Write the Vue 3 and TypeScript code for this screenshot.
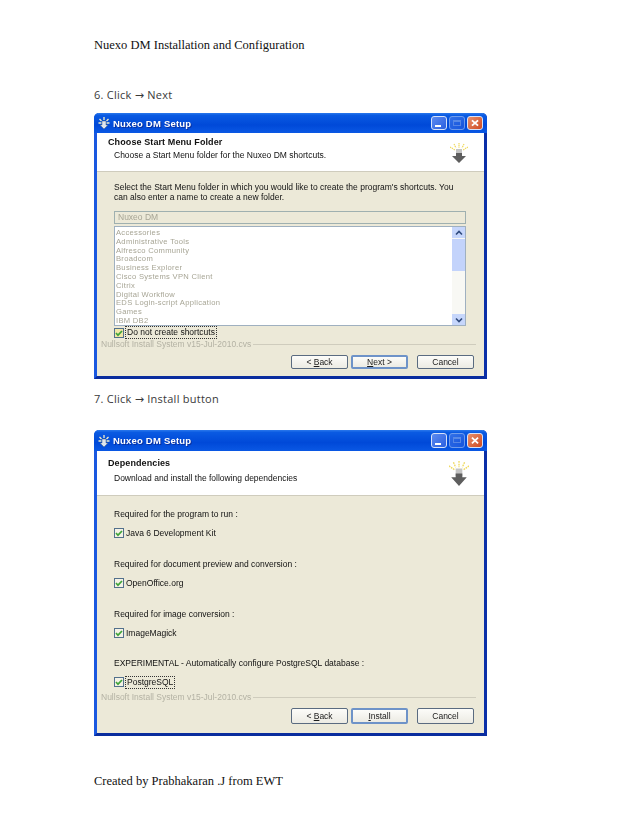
<script setup lang="ts">
const folders: string[] = [
  'Accessories',
  'Administrative Tools',
  'Alfresco Community',
  'Broadcom',
  'Business Explorer',
  'Cisco Systems VPN Client',
  'Citrix',
  'Digital Workflow',
  'EDS Login-script Application',
  'Games',
  'IBM DB2',
]

const deps: { label: string; item: string; focus?: boolean }[] = [
  { label: 'Required for the program to run :', item: 'Java 6 Development Kit' },
  { label: 'Required for document preview and conversion :', item: 'OpenOffice.org' },
  { label: 'Required for image conversion :', item: 'ImageMagick' },
  { label: 'EXPERIMENTAL - Automatically configure PostgreSQL database :', item: 'PostgreSQL', focus: true },
]
</script>

<template>
  <div class="page">
    <p class="doc-title">Nuexo DM Installation and Configuration</p>

    <p class="step first">6. Click <span class="arr">→</span> Next</p>

    <section class="dialog d1">
      <div class="titlebar">
        <svg class="app-icon" viewBox="0 0 14 14" width="14" height="14">
          <path d="M7 1v3M2.5 3l2 2M11.5 3l-2 2M1.5 7h3M12.5 7h-3" stroke="#f4f0c8" stroke-width="1.3" fill="none" />
          <path d="M5 5h4v4h2l-4 4-4-4h2z" fill="#dfe6ee" stroke="#44607c" stroke-width=".5" />
        </svg>
        <span class="title-text">Nuxeo DM Setup</span>
        <span class="wbtn min"><i></i></span>
        <span class="wbtn max"><i></i></span>
        <span class="wbtn close">
          <svg viewBox="0 0 16 16" preserveAspectRatio="none"><path d="M4.5 4.5l7 7M11.5 4.5l-7 7" stroke="#fff" stroke-width="2" /></svg>
        </span>
      </div>
      <header class="head">
        <div>
          <h4>Choose Start Menu Folder</h4>
          <p>Choose a Start Menu folder for the Nuxeo DM shortcuts.</p>
        </div>
        <svg class="setup-icon" viewBox="0 0 18 20" preserveAspectRatio="none">
          <path d="M9 0v5M4 1l2 4M14 1l-2 4M0 4l5 3M18 4l-5 3" stroke="#efd95e" stroke-width="1.2" stroke-dasharray="1.4 .7" fill="none" />
          <path d="M6 6h6v6H6z" fill="#c4c4c4" />
          <path d="M6 10h6v3h4l-7 7-7-7h4z" fill="#5e5e5e" />
        </svg>
      </header>
      <div class="body">
        <p class="intro">Select the Start Menu folder in which you would like to create the program's shortcuts. You can also enter a name to create a new folder.</p>
        <div class="folder-input">Nuxeo DM</div>
        <div class="listbox">
          <ul>
            <li v-for="f in folders" :key="f">{{ f }}</li>
          </ul>
          <div class="scroll">
            <span class="arrow"><svg viewBox="0 0 10 8" width="10" height="8"><path d="M2 5.5l3-3 3 3" stroke="#2f4a7d" stroke-width="1.6" fill="none" /></svg></span>
            <span class="thumb"></span>
            <span class="track"></span>
            <span class="arrow"><svg viewBox="0 0 10 8" width="10" height="8"><path d="M2 2.5l3 3 3-3" stroke="#2f4a7d" stroke-width="1.6" fill="none" /></svg></span>
          </div>
        </div>
        <label class="check short">
          <span class="box yellow"><svg viewBox="0 0 10 10" width="10" height="10"><path d="M2 5l2 2.2L8 3" stroke="#3fa33a" stroke-width="1.7" fill="none" /></svg></span>
          <span class="focus">Do not create shortcuts</span>
        </label>
      </div>
      <div class="brand"><span>Nullsoft Install System v15-Jul-2010.cvs</span><i></i></div>
      <div class="actions">
        <button class="btn">&lt; <u>B</u>ack</button>
        <button class="btn default"><u>N</u>ext &gt;</button>
        <button class="btn cancel">Cancel</button>
      </div>
    </section>

    <p class="step second">7. Click <span class="arr">→</span> Install button</p>

    <section class="dialog d2">
      <div class="titlebar">
        <svg class="app-icon" viewBox="0 0 14 14" width="14" height="14">
          <path d="M7 1v3M2.5 3l2 2M11.5 3l-2 2M1.5 7h3M12.5 7h-3" stroke="#f4f0c8" stroke-width="1.3" fill="none" />
          <path d="M5 5h4v4h2l-4 4-4-4h2z" fill="#dfe6ee" stroke="#44607c" stroke-width=".5" />
        </svg>
        <span class="title-text">Nuxeo DM Setup</span>
        <span class="wbtn min"><i></i></span>
        <span class="wbtn max"><i></i></span>
        <span class="wbtn close">
          <svg viewBox="0 0 16 16" preserveAspectRatio="none"><path d="M4.5 4.5l7 7M11.5 4.5l-7 7" stroke="#fff" stroke-width="2" /></svg>
        </span>
      </div>
      <header class="head">
        <div>
          <h4>Dependencies</h4>
          <p>Download and install the following dependencies</p>
        </div>
        <svg class="setup-icon" viewBox="0 0 18 20" preserveAspectRatio="none">
          <path d="M9 0v5M4 1l2 4M14 1l-2 4M0 4l5 3M18 4l-5 3" stroke="#efd95e" stroke-width="1.2" stroke-dasharray="1.4 .7" fill="none" />
          <path d="M6 6h6v6H6z" fill="#c4c4c4" />
          <path d="M6 10h6v3h4l-7 7-7-7h4z" fill="#5e5e5e" />
        </svg>
      </header>
      <div class="body">
        <div v-for="d in deps" :key="d.item" class="dep">
          <p>{{ d.label }}</p>
          <label class="check">
            <span class="box"><svg viewBox="0 0 10 10" width="10" height="10"><path d="M2 5l2 2.2L8 3" stroke="#3fa33a" stroke-width="1.7" fill="none" /></svg></span>
            <span :class="{ focus: d.focus }">{{ d.item }}</span>
          </label>
        </div>
      </div>
      <div class="brand"><span>Nullsoft Install System v15-Jul-2010.cvs</span><i></i></div>
      <div class="actions">
        <button class="btn">&lt; <u>B</u>ack</button>
        <button class="btn default"><u>I</u>nstall</button>
        <button class="btn cancel">Cancel</button>
      </div>
    </section>

    <p class="doc-title footer">Created by Prabhakaran .J from EWT</p>
  </div>
</template>

<style scoped>
.page {
  width: 638px;
  height: 826px;
  overflow: hidden;
  box-sizing: border-box;
  padding: 37px 0 0 94px;
  background: #fff;
  color: #1c1c1c;
}

p,
h4,
ul {
  margin: 0;
  padding: 0;
}

.doc-title {
  font-family: "Liberation Serif", serif;
  font-size: 12.5px;
  line-height: 16px;
  color: #111;
}

.footer {
  margin-top: 37px;
}

.step {
  font-family: "Open Sans", sans-serif;
  font-size: 11px;
  line-height: 14px;
  letter-spacing: 0.25px;
  color: #3a3a3a;
}

.arr {
  font-family: "DejaVu Sans", sans-serif;
}

.first {
  margin-top: 35px;
  margin-bottom: 10px;
}

.second {
  margin-top: 13px;
  margin-bottom: 23px;
}

.dialog {
  width: 393px;
  box-sizing: border-box;
  border: 3px solid #0a3fd0;
  border-top: 0;
  border-color: #0a2fa8 #0a2fa8 #0a2d9e #1a58e0;
  border-radius: 5px 5px 0 0;
  background: #ece9d8;
  font-family: "Liberation Sans", sans-serif;
  font-size: 8.5px;
  color: #111;
  display: flex;
  flex-direction: column;
  filter: blur(0.2px);
}

.d1 {
  height: 266px;
}

.d2 {
  height: 306px;
}

.titlebar {
  margin: 0 -3px;
  height: 20px;
  flex: none;
  display: flex;
  align-items: center;
  padding: 0 4px 0 3px;
  border-radius: 5px 5px 0 0;
  background: linear-gradient(#2a78ec 0, #0a5ae2 12%, #0049d8 60%, #0a58e4 100%);
}

.d2 .titlebar {
  height: 21px;
}

.app-icon {
  flex: none;
}

.title-text {
  margin-left: 2px;
  flex: 1;
  font-family: "Liberation Sans", sans-serif;
  font-weight: 700;
  font-size: 9.5px;
  letter-spacing: 0.2px;
  color: #fff;
  text-shadow: 1px 1px 0 #0a2f9c;
}

.wbtn {
  width: 16px;
  height: 14px;
  margin-left: 2px;
  box-sizing: border-box;
  border: 1px solid #d7e2f8;
  border-radius: 3px;
  background: linear-gradient(135deg, #5c8bf0, #2a5fe0);
  position: relative;
  display: block;
}

.d2 .wbtn {
  height: 15px;
}

.wbtn i {
  position: absolute;
  display: block;
}

.min i {
  left: 3px;
  bottom: 2px;
  width: 6px;
  height: 2px;
  background: #fff;
}

.max {
  opacity: 0.5;
}

.max i {
  left: 3px;
  top: 3px;
  width: 8px;
  height: 6px;
  box-sizing: border-box;
  border: 1px solid #a9c1f2;
  border-top-width: 2px;
}

.close {
  background: linear-gradient(135deg, #e8906c, #cf4a22);
}

.close svg {
  display: block;
  width: 14px;
  height: 100%;
}

.head {
  flex: none;
  height: 39px;
  box-sizing: border-box;
  background: #fff;
  border-bottom: 1px solid #cfccbd;
  padding: 4px 16px 0 11px;
  display: flex;
  justify-content: space-between;
}

.d2 .head {
  height: 45px;
  padding-top: 6px;
}

.head h4 {
  font-size: 9px;
  line-height: 11px;
  font-weight: 700;
  color: #111;
  letter-spacing: 0.1px;
}

.head p {
  margin: 2px 0 0 6px;
  line-height: 11px;
}

.d2 .head h4 {
  margin-top: 1px;
}

.d2 .head p {
  margin-top: 4px;
}

.setup-icon {
  width: 18px;
  height: 20px;
  margin-top: 6px;
}

.d2 .setup-icon {
  width: 20px;
  height: 25px;
  margin-top: 4px;
  margin-right: -1px;
}

.body {
  flex: 1;
  padding: 0 18px 0 17px;
}

.intro {
  margin-top: 10px;
  width: 350px;
  line-height: 10px;
}

.folder-input {
  margin-top: 9px;
  height: 13px;
  box-sizing: border-box;
  border: 1px solid #9fb0b0;
  padding-left: 3px;
  line-height: 11px;
  color: #a7a595;
}

.listbox {
  margin-top: 2px;
  height: 100px;
  box-sizing: border-box;
  border: 1px solid #9fb0c0;
  background: #fff;
  display: flex;
}

.listbox ul {
  flex: 1;
  list-style: none;
  padding: 2px 0 0 1px;
  color: #a7a595;
  font-size: 7.6px;
  letter-spacing: 0.3px;
}

.listbox li {
  height: 8.8px;
  line-height: 8.8px;
}

.scroll {
  width: 13px;
  display: flex;
  flex-direction: column;
  background: #f8f8f4;
}

.arrow {
  height: 11px;
  flex: none;
  display: flex;
  align-items: center;
  justify-content: center;
  background: #c6d6fb;
}

.thumb {
  height: 32px;
  flex: none;
  margin-top: 1px;
  background: #c3d3fb;
}

.track {
  flex: 1;
}

.check {
  display: flex;
  align-items: center;
  gap: 2px;
  height: 11px;
}

.short {
  margin-top: 1px;
}

.box {
  width: 10px;
  height: 10px;
  flex: none;
  box-sizing: border-box;
  border: 1px solid #52708c;
  background: #f4f2e6;
  position: relative;
}

.box svg {
  position: absolute;
  left: -1px;
  top: -1px;
}

.yellow {
  background: #f2e8a8;
}

.focus {
  outline: 1px dotted #333;
  padding: 0 1px;
  line-height: 11px;
}

.dep {
  margin-bottom: 19.8px;
}

.dep:first-child {
  margin-top: 13px;
}

.dep p {
  line-height: 11px;
  margin-bottom: 7px;
  height: 11px;
}

.dep .check {
  height: 12px;
}

.d2 .body {
  overflow: hidden;
}

.brand {
  flex: none;
  display: flex;
  align-items: center;
  gap: 2px;
  height: 10px;
  padding: 0 8px 0 4px;
  color: #b4b2a4;
  font-size: 8.5px;
  white-space: nowrap;
}

.brand i {
  flex: 1;
  height: 1px;
  background: #cfccbd;
}

.actions {
  flex: none;
  display: flex;
  justify-content: flex-end;
  gap: 3px;
  padding: 6px 10px 7px 0;
}

.d2 .actions {
  padding: 6px 10px 9px 0;
}

.btn {
  width: 57px;
  height: 14px;
  box-sizing: border-box;
  padding: 0;
  border: 1px solid #5a6b80;
  border-radius: 2px;
  background: linear-gradient(#fcfcf9, #ecebe3);
  font-family: "Liberation Sans", sans-serif;
  font-size: 8.5px;
  line-height: 11px;
  color: #1c1c1c;
}

.d2 .btn {
  height: 16px;
}

.default {
  border: 2px solid #6e93c8;
}

.cancel {
  margin-left: 6px;
}
</style>
